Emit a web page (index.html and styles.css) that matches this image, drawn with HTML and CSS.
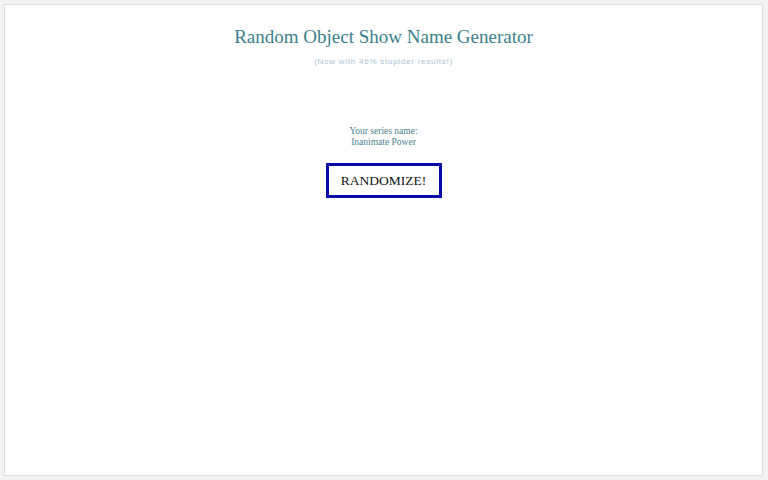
FILE: index.html
```html
<!DOCTYPE html>
<html lang="en">
<head>
    <meta charset="UTF-8">
    <meta name="viewport" content="width=device-width, initial-scale=1.0">
    <title>Random Object Show Name Generator</title>
    <link rel="stylesheet" href="styles.css">
</head>
<body>
    <div class="container">
        <h1>Random Object Show Name Generator</h1>
        <p class="tagline">(Now with 46% stupider results!)</p>

        <div class="result">
            <p>Your series name:</p>
            <p id="series-name">Inanimate Power</p>
        </div>

        <button onclick="randomize()">RANDOMIZE!</button>
    </div>

    <script>
        const firstWords = ["Inanimate", "Object", "Battle", "Total", "Brawl", "Random", "Super"];
        const secondWords = ["Power", "Insanity", "Overload", "Island", "Mayhem", "Chaos", "Showdown"];

        function randomize() {
            const a = firstWords[Math.floor(Math.random() * firstWords.length)];
            const b = secondWords[Math.floor(Math.random() * secondWords.length)];
            document.getElementById("series-name").textContent = a + " " + b;
        }
    </script>
</body>
</html>
```

FILE: styles.css
```css
body {
    font-family: 'Liberation Serif', 'Times New Roman', serif;
    background: #f3f3f3;
    margin: 0;
    padding: 4px 5px 4px 4px;
}

.container {
    height: 472px;
    background: #fff;
    border: 1px solid #dcdcdc;
    text-align: center;
    box-sizing: border-box;
    padding-top: 20px;
}

h1 {
    font-weight: normal;
    font-size: 19px;
    color: #3c7f8c;
    margin: 0;
    line-height: 24px;
}

.tagline {
    font-family: 'Liberation Sans', Arial, sans-serif;
    font-size: 8px;
    letter-spacing: 0.75px;
    color: #a9c2cf;
    margin: 8px 0 0;
    line-height: 9px;
}

.result {
    margin-top: 60px;
    font-size: 9.5px;
    color: #4a8290;
}

.result p {
    margin: 0;
    line-height: 11px;
}

button {
    font-family: 'Liberation Serif', 'Times New Roman', serif;
    font-size: 13.5px;
    color: #111;
    background: #fff;
    border: 3px solid #0a0aa8;
    width: 116px;
    height: 35px;
    margin-top: 15px;
    cursor: pointer;
}
```
